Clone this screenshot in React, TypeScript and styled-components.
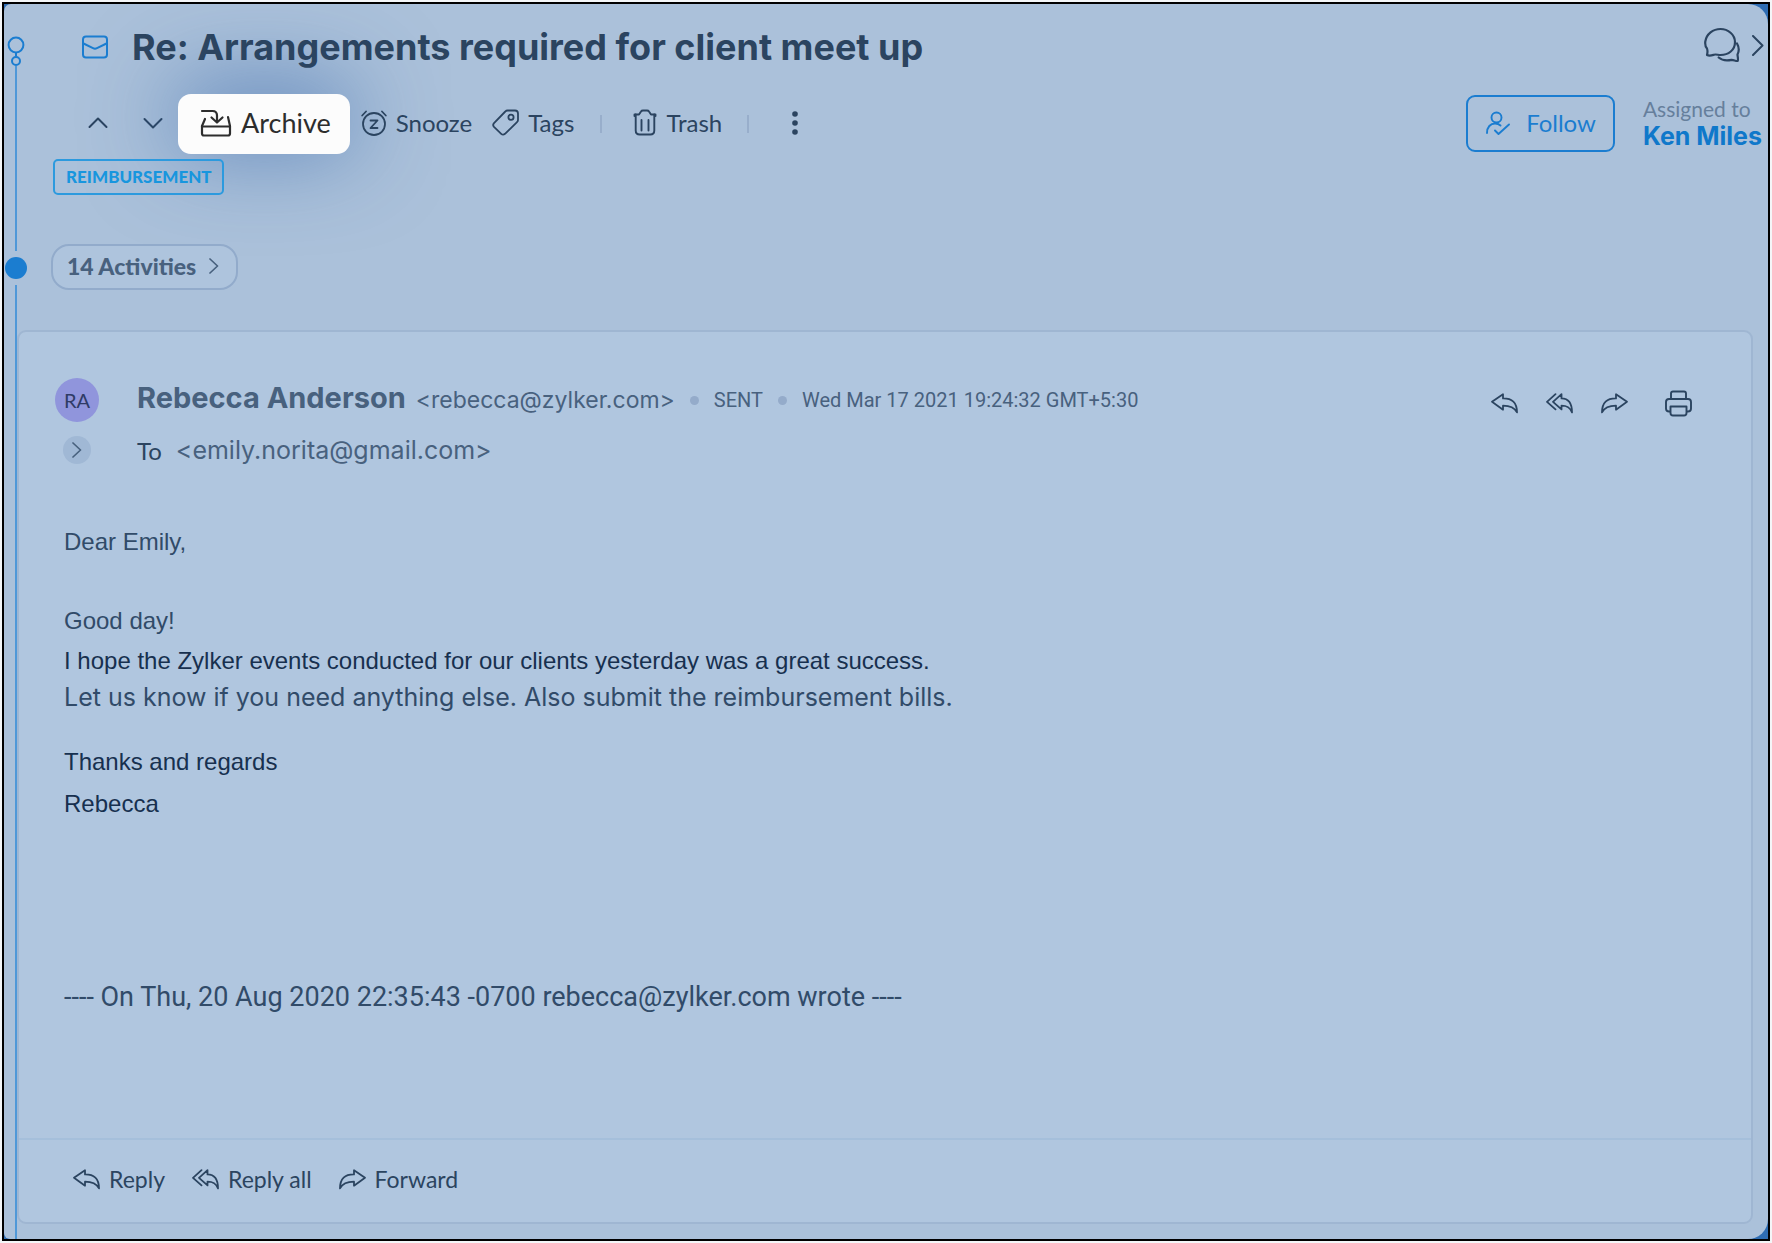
import React from "react";
import styled, { createGlobalStyle } from "styled-components";

const ink = "#2b4460";
const blue = "#1b7dd0";
const display = `Inter, "Liberation Sans", sans-serif`;

const GlobalStyle = createGlobalStyle`
  *, *::before, *::after { box-sizing: border-box; }
  body {
    margin: 0;
    padding: 2px;
    background: #f4f6f8;
    font-family: Lato, "Liberation Sans", sans-serif;
    color: ${ink};
  }
  button { font: inherit; color: inherit; background: none; border: 0; padding: 0; margin: 0; cursor: pointer; }
  h1, h2, p { margin: 0; }
`;

const Frame = styled.div`
  border: 2px solid #000;
  background: #2f6db3;
  min-height: calc(100vh - 4px);
  display: flex;
`;

const Panel = styled.main`
  flex: 1;
  min-width: 0;
  display: grid;
  grid-template-columns: 24px minmax(0, 1fr);
  background: #abc1da;
  border-radius: 7px 20px 20px 6px;
  overflow: hidden;
`;

const Rail = styled.div`
  grid-column: 1;
  grid-row: 1;
  z-index: 1;
  display: flex;
  flex-direction: column;
  align-items: center;
  padding-top: 32px;
  pointer-events: none;
`;

const RailLine = styled.div<{ $length?: number }>`
  width: 2px;
  background: #4f98d8;
  ${(p) => (p.$length ? `height: ${p.$length}px;` : "flex: 1;")}
`;

const RailDot = styled.div`
  width: 22px;
  height: 22px;
  margin: 6px 0;
  flex: none;
  border-radius: 50%;
  background: #1b7dd0;
`;

const Content = styled.div`
  grid-column: 1 / -1;
  grid-row: 1;
  display: flex;
  flex-direction: column;
  padding: 0 15px 15px 13px;
`;

const TitleRow = styled.header`
  position: relative;
  z-index: 1;
  display: flex;
  align-items: center;
  height: 84px;
  padding: 2px 0 0 65px;
  margin-right: -11px;
  color: ${ink};
`;

const Title = styled.h1`
  flex: 1;
  margin-left: 24px;
  font-family: ${display};
  font-size: 36px;
  line-height: 44px;
  font-weight: 700;
`;

const TitleActions = styled.div`
  display: flex;
  align-items: center;
  gap: 12px;
  padding-bottom: 4px;
`;

const IconButton = styled.button`
  display: flex;
  align-items: center;
  justify-content: center;
`;

const Toolbar = styled.div`
  display: flex;
  align-items: center;
  height: 71px;
  padding-left: 71px;
  margin-right: -9px;
  font-size: 24px;
  line-height: 30px;
`;

const ToolButton = styled.button<{ $after?: number }>`
  display: flex;
  align-items: center;
  gap: 9px;
  padding-bottom: 2px;
  margin-right: ${(p) => p.$after || 0}px;
`;

const ArchiveButton = styled.button`
  display: flex;
  align-items: center;
  gap: 9px;
  height: 60px;
  padding: 0 19px 2px 22px;
  margin: 0 11px 0 15px;
  border-radius: 13px;
  background: #fcfcfc;
  color: #2d2d2d;
  font-size: 27px;
  box-shadow: 0 -7px 88px 4px rgba(50, 98, 168, 0.64);
`;

const Divider = styled.span<{ $after: number }>`
  width: 2px;
  height: 18px;
  margin-right: ${(p) => p.$after}px;
  background: #98aecb;
`;

const Spacer = styled.span`
  flex: 1;
`;

const FollowButton = styled.button`
  display: flex;
  align-items: center;
  gap: 16px;
  height: 57px;
  padding: 0 17px 2px 18px;
  border: 2px solid ${blue};
  border-radius: 9px;
  color: ${blue};
`;

const Assignee = styled.div`
  display: flex;
  flex-direction: column;
  gap: 1px;
  padding-bottom: 3px;
  margin-left: 28px;
  font-size: 21px;
  line-height: 27px;
  color: #667f9c;
`;

const AssigneeLink = styled.a`
  color: #0f78ca;
  font-family: ${display};
  font-size: 25px;
  font-weight: 700;
  text-decoration: none;
`;

const LabelRow = styled.div`
  padding: 0 0 0 36px;
`;

const Label = styled.span`
  display: inline-flex;
  align-items: center;
  height: 36px;
  padding: 0 10px 2px 11px;
  border: 2px solid #2c9ade;
  border-radius: 5px;
  color: #1896de;
  font-size: 17px;
  font-weight: 900;
`;

const ActivitiesButton = styled.button`
  display: flex;
  align-items: center;
  align-self: flex-start;
  gap: 13px;
  height: 46px;
  margin: 49px 0 40px 34px;
  padding: 0 17px 3px 14px;
  border: 2px solid #92abcb;
  border-radius: 18px;
  background: #aec4dd;
  color: #48617e;
  font-size: 23px;
  font-weight: 900;
`;

const Card = styled.article`
  flex: 1;
  display: flex;
  flex-direction: column;
  border: 2px solid #9fb6d2;
  border-radius: 9px;
  background: #b0c6df;
`;

const MessageHead = styled.div`
  display: grid;
  grid-template-columns: 44px minmax(0, 1fr) auto;
  column-gap: 38px;
  row-gap: 6px;
  align-items: center;
  padding: 46px 59px 0 36px;
  color: #48617e;
`;

const Avatar = styled.div`
  display: flex;
  align-items: center;
  justify-content: center;
  width: 44px;
  height: 44px;
  border-radius: 50%;
  background: #9095dc;
  color: #2f3b66;
  font-size: 20px;
`;

const Sender = styled.div`
  display: flex;
  align-items: center;
  white-space: nowrap;
`;

const SenderName = styled.h2`
  margin-right: 10px;
  padding-bottom: 5px;
  font-family: ${display};
  font-size: 29px;
  line-height: 38px;
  font-weight: 700;
`;

const Address = styled.span<{ $large?: boolean }>`
  font-family: ${display};
  font-size: ${(p) => (p.$large ? 25 : 23)}px;
  line-height: 30px;
`;

const Meta = styled.span`
  font-family: Roboto, sans-serif;
  font-size: 20px;
  line-height: 26px;
`;

const Dot = styled.span`
  width: 9px;
  height: 9px;
  margin: 0 15px;
  border-radius: 50%;
  background: #94abca;
`;

const MessageTools = styled.div`
  display: flex;
  align-items: center;
  gap: 28px;
  padding-top: 6px;
  color: ${ink};
`;

const PrintButton = styled(IconButton)`
  margin-left: 9px;
`;

const ExpandButton = styled(IconButton)`
  justify-self: center;
  width: 28px;
  height: 28px;
  border-radius: 50%;
  background: #a0b8d5;
`;

const Recipients = styled.div`
  display: flex;
  align-items: center;
  gap: 14px;
  grid-column: 2 / -1;
  height: 44px;
  font-size: 24px;
`;

const ToLabel = styled.span`
  color: ${ink};
`;

const Body = styled.div`
  flex: 1;
  padding: 54px 44px 0 45px;
`;

const Line = styled.p<{ $gap?: number; $dark?: boolean }>`
  margin-top: ${(p) => p.$gap || 0}px;
  font-family: "Liberation Sans", Arial, sans-serif;
  font-size: 24px;
  line-height: 32px;
  color: ${(p) => (p.$dark ? "#17304f" : "#314b69")};
`;

const NoteLine = styled(Line)`
  font-family: ${display};
  font-size: 25px;
`;

const QuoteLine = styled(Line)`
  font-family: Roboto, sans-serif;
  font-size: 27px;
`;

const CardFoot = styled.footer`
  display: flex;
  align-items: center;
  gap: 27px;
  height: 84px;
  padding: 0 54px 2px;
  border-top: 2px solid #a5bfdb;
  font-size: 23px;
`;

type IconProps = { w: number; h: number; sw?: number; color?: string; children: React.ReactNode };

const Icon = ({ w, h, sw = 2, color = "currentColor", children }: IconProps) => (
  <svg
    width={w}
    height={h}
    viewBox={`0 0 ${w} ${h}`}
    fill="none"
    stroke={color}
    strokeWidth={sw}
    strokeLinecap="round"
    strokeLinejoin="round"
    aria-hidden="true"
  >
    {children}
  </svg>
);

const RailNode = () => (
  <svg width="18" height="30" viewBox="0 0 18 30" fill="none" stroke={blue} strokeWidth="2" aria-hidden="true">
    <circle cx="9" cy="9" r="7.4" />
    <path d="M9 16.5v4" />
    <circle cx="9" cy="25" r="4" />
  </svg>
);

const MailIcon = () => (
  <Icon w={26} h={24} color={blue}>
    <rect x="1" y="1.5" width="24" height="21" rx="3" />
    <path d="M1.5 8.5 11 13.2q2 1 4 0l9.500-4.700" />
  </Icon>
);

const UpIcon = () => (
  <Icon w={20} h={12}>
    <path d="m1.500 10 8.500-8.500 8.500 8.500" />
  </Icon>
);

const DownIcon = () => (
  <Icon w={20} h={12}>
    <path d="m1.500 2 8.500 8.500 8.500-8.500" />
  </Icon>
);

const RightIcon = ({ w = 10, h = 16 }: { w?: number; h?: number }) => (
  <Icon w={w} h={h} sw={h > 18 ? 2 : 1.700}>
    <path d={`M1 1 ${w - 1.500} ${h / 2} 1 ${h - 1}`} />
  </Icon>
);

const ArchiveIcon = () => (
  <Icon w={32} h={28} sw={2.200}>
    <path d="M2 2h10.500q4.500 0 4.500 4.500V13" />
    <path d="m11.500 8.500 5.500 5 5.500-5" />
    <path d="M5 10 2 17v7.500q0 2 2 2h24q2 0 2-2V17L28 8" />
    <path d="M2 17.500h28" />
  </Icon>
);

const SnoozeIcon = () => (
  <Icon w={26} h={26} sw={1.800}>
    <circle cx="13" cy="14" r="11" />
    <path d="M1.200 5.500 5 1.500M24.800 5.500 21 1.500" />
    <path d="M9.500 10.500h7l-7 7.500h7" />
  </Icon>
);

const TagIcon = () => (
  <Icon w={27} h={27} sw={1.800}>
    <path d="M15.500 1.500h7.500q3 0 3 3v6.500q0 1.300-1 2.200L13 24.800q-2 1.700-3.800 0L2 17.800q-1.700-1.800 0-3.700L13.300 2.500q.9-1 2.200-1Z" />
    <circle cx="19" cy="8.300" r="2.600" />
  </Icon>
);

const TrashIcon = () => (
  <Icon w={24} h={27} sw={1.900}>
    <path d="M1.500 7V5.500H6L8 2.500q.6-1 2-1h4q1.400 0 2 1l2 3h4.500V7" />
    <path d="M2.700 5.500V21.500q0 4 4 4h10.600q4 0 4-4V5.500" />
    <path d="M8.500 11v10.500M15.500 11v10.500" />
  </Icon>
);

const MoreIcon = () => (
  <svg width="6" height="24" viewBox="0 0 6 24" fill="currentColor" aria-hidden="true">
    <circle cx="3" cy="3" r="2.800" />
    <circle cx="3" cy="12" r="2.800" />
    <circle cx="3" cy="21" r="2.800" />
  </svg>
);

const ChatIcon = () => (
  <Icon w={36} h={36} sw={2.200}>
    <path d="M3 28c.8-3 .6-4.800 0-6.500C.8 19 1 17 1.300 14.500 2.500 7 9 2 16.500 2S31 7.500 31 15.200 24.500 28 16.500 28c-2.500 0-4.500-.9-6.500-.3-2.500.8-4.500 1.600-7 .3Z" />
    <path d="M33 16.500c2.300 4 2.300 7.500.5 11 0 2 1 4 .2 6.500-2.200.2-3.700-1.200-6-1.200-5 1-10.200.2-13-2.300" />
  </Icon>
);

const FollowIcon = () => (
  <Icon w={24} h={24} sw={1.900}>
    <circle cx="10.500" cy="6.500" r="5" />
    <path d="M1 22c0-6 3.500-9.500 8-9.500 2.500 0 4 .6 5.500 2" />
    <path d="m9 19.500 3.500 3.500L23 13.500" />
  </Icon>
);

const ReplyIcon = () => (
  <Icon w={27} h={21} sw={1.800}>
    <path d="M1 8.800 12 1.200v4.200c9-.1 14 4 14 14-2.500-4.700-6-6.700-14-6.700v4Z" />
  </Icon>
);

const ReplyAllIcon = () => (
  <Icon w={27} h={21} sw={1.800}>
    <path d="M9.500 1.200 1 8.800l8.500 7.600" />
    <path d="m7 8.800 8.500-7.600v4.200c7 .1 10.500 4.500 10.500 14-2-4.700-4.500-6.700-10.500-6.700v3.700Z" />
  </Icon>
);

const ForwardIcon = () => (
  <Icon w={27} h={21} sw={1.800}>
    <path d="M26 8.800 15 1.200v4.200c-9-.1-14 4-14 14 2.500-4.700 6-6.700 14-6.700v4Z" />
  </Icon>
);

const PrintIcon = () => (
  <Icon w={27} h={27} sw={1.900}>
    <path d="M6 9V3.500q0-2 2-2h11q2 0 2 2V9" />
    <path d="M5 21.500H4q-3 0-3-3V12q0-3 3-3h19q3 0 3 3v6.500q0 3-3 3h-1" />
    <path d="M5.500 16.500h16V23q0 2.500-2.500 2.500H8q-2.500 0-2.500-2.500Z" />
  </Icon>
);

export default function App() {
  return (
    <>
      <GlobalStyle />
      <Frame>
        <Panel>
          <Rail>
            <RailNode />
            <RailLine $length={185} />
            <RailDot />
            <RailLine />
          </Rail>
          <Content>
            <TitleRow>
              <MailIcon />
              <Title>Re: Arrangements required for client meet up</Title>
              <TitleActions>
                <IconButton aria-label="Comments"><ChatIcon /></IconButton>
                <IconButton aria-label="Next"><RightIcon w={12} h={21} /></IconButton>
              </TitleActions>
            </TitleRow>

            <Toolbar>
              <ToolButton aria-label="Previous conversation" $after={35}><UpIcon /></ToolButton>
              <ToolButton aria-label="Next conversation"><DownIcon /></ToolButton>
              <ArchiveButton><ArchiveIcon />Archive</ArchiveButton>
              <ToolButton $after={20}><SnoozeIcon />Snooze</ToolButton>
              <ToolButton $after={26}><TagIcon />Tags</ToolButton>
              <Divider $after={31} />
              <ToolButton $after={25}><TrashIcon />Trash</ToolButton>
              <Divider $after={43} />
              <ToolButton aria-label="More actions"><MoreIcon /></ToolButton>
              <Spacer />
              <FollowButton><FollowIcon />Follow</FollowButton>
              <Assignee>
                Assigned to
                <AssigneeLink href="#assignee">Ken Miles</AssigneeLink>
              </Assignee>
            </Toolbar>

            <LabelRow><Label>REIMBURSEMENT</Label></LabelRow>

            <ActivitiesButton>14 Activities<RightIcon /></ActivitiesButton>

            <Card>
              <MessageHead>
                <Avatar>RA</Avatar>
                <Sender>
                  <SenderName>Rebecca Anderson</SenderName>
                  <Address>&lt;rebecca@zylker.com&gt;</Address>
                  <Dot />
                  <Meta>SENT</Meta>
                  <Dot />
                  <Meta>Wed Mar 17 2021 19:24:32 GMT+5:30</Meta>
                </Sender>
                <MessageTools>
                  <IconButton aria-label="Reply"><ReplyIcon /></IconButton>
                  <IconButton aria-label="Reply all"><ReplyAllIcon /></IconButton>
                  <IconButton aria-label="Forward"><ForwardIcon /></IconButton>
                  <PrintButton aria-label="Print"><PrintIcon /></PrintButton>
                </MessageTools>
                <ExpandButton aria-label="Show details"><RightIcon /></ExpandButton>
                <Recipients>
                  <ToLabel>To</ToLabel>
                  <Address $large>&lt;emily.norita@gmail.com&gt;</Address>
                </Recipients>
              </MessageHead>

              <Body>
                <Line>Dear Emily,</Line>
                <Line $gap={47}>Good day!</Line>
                <Line $gap={8} $dark>I hope the Zylker events conducted for our clients yesterday was a great success.</Line>
                <NoteLine $gap={4}>Let us know if you need anything else. Also submit the reimbursement bills.</NoteLine>
                <Line $gap={33} $dark>Thanks and regards</Line>
                <Line $gap={10} $dark>Rebecca</Line>
                <QuoteLine $gap={161}>---- On Thu, 20 Aug 2020 22:35:43 -0700 rebecca@zylker.com wrote ----</QuoteLine>
              </Body>

              <CardFoot>
                <ToolButton><ReplyIcon />Reply</ToolButton>
                <ToolButton><ReplyAllIcon />Reply all</ToolButton>
                <ToolButton><ForwardIcon />Forward</ToolButton>
              </CardFoot>
            </Card>
          </Content>
        </Panel>
      </Frame>
    </>
  );
}
